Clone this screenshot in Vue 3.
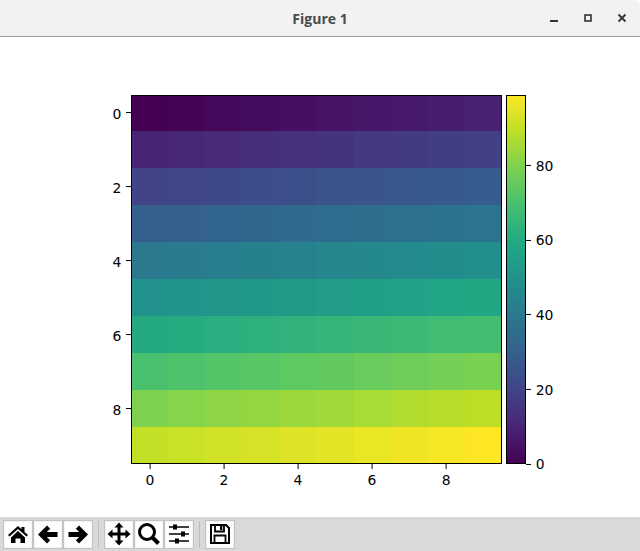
<script setup>
const viridis = [
  [68, 1, 84], [72, 36, 117], [65, 68, 135], [53, 95, 141], [42, 120, 142],
  [33, 145, 140], [34, 168, 132], [68, 191, 112], [122, 209, 81], [189, 223, 38], [253, 231, 37],
]

const colorAt = (t) => {
  const p = Math.min(t, 1) * 10
  const i = Math.min(Math.floor(p), 9)
  const f = p - i
  const c = viridis[i].map((v, k) => Math.round(v + (viridis[i + 1][k] - v) * f))
  return `rgb(${c.join(',')})`
}

const cells = Array.from({ length: 100 }, (_, i) => ({ id: i, color: colorAt(i / 99) }))
const ticks = [0, 2, 4, 6, 8]
const barTicks = [0, 20, 40, 60, 80]
const barGradient = `linear-gradient(to top, ${viridis.map((_, i) => colorAt(i / 10)).join(', ')})`
</script>

<template>
  <div class="window">
    <header class="titlebar">
      <span class="title">Figure 1</span>
      <div class="controls">
        <svg width="10" height="10" viewBox="0 0 10 10"><rect x="1" y="7" width="8" height="2" fill="#2e3436" /></svg>
        <svg width="10" height="10" viewBox="0 0 10 10"><rect x="2" y="2" width="6" height="6" fill="none" stroke="#2e3436" stroke-width="1.6" /></svg>
        <svg width="10" height="10" viewBox="0 0 10 10"><path d="M1.5 1.5l7 7M8.5 1.5l-7 7" stroke="#2e3436" stroke-width="1.8" /></svg>
      </div>
    </header>

    <main class="figure">
      <div class="axes">
        <div class="heatmap">
          <div v-for="c in cells" :key="c.id" :style="{ background: c.color }"></div>
        </div>
        <div v-for="t in ticks" :key="'x' + t" class="tick tick-x" :style="{ left: (t + 0.5) * 10 + '%' }">
          <span class="mark"></span><span class="label">{{ t }}</span>
        </div>
        <div v-for="t in ticks" :key="'y' + t" class="tick tick-y" :style="{ top: (t + 0.5) * 10 + '%' }">
          <span class="label">{{ t }}</span><span class="mark"></span>
        </div>
      </div>
      <div class="colorbar" :style="{ background: barGradient }">
        <div v-for="t in barTicks" :key="t" class="tick tick-bar" :style="{ bottom: t / 99 * 100 + '%' }">
          <span class="mark"></span><span class="label">{{ t }}</span>
        </div>
      </div>
    </main>

    <footer class="toolbar">
      <div class="group">
        <button class="tool">
          <svg width="22" height="22" viewBox="0 0 22 22"><path d="M11 3L1 12l1.5 1.5L11 6l8.500 7.500L21 12l-3.500-3.100V4h-3v2.200z" fill="#000" /><path d="M4 14.500L11 8l7 6.500V20h-4.500v-4.500h-5V20H4z" fill="#000" /></svg>
        </button>
        <button class="tool">
          <svg width="22" height="22" viewBox="0 0 22 22"><path d="M10 2.500l3.200 3.200-3.400 3.300H20.500v5H9.800l3.400 3.300-3.200 3.200L1 11.500z" fill="#000" /></svg>
        </button>
        <button class="tool">
          <svg width="22" height="22" viewBox="0 0 22 22"><path d="M12 2.500L8.800 5.700l3.400 3.300H1.500v5h10.700l-3.400 3.300 3.200 3.200 9-9z" fill="#000" /></svg>
        </button>
      </div>
      <span class="sep"></span>
      <div class="group">
        <button class="tool">
          <svg width="24" height="24" viewBox="0 0 24 24"><path d="M12 0.500l4.500 5h-3v5h5v-3l5 4.500-5 4.500v-3h-5v5h3L12 23.500l-4.500-5h3v-5h-5v3L0.500 12l5-4.500v3h5v-5h-3z" fill="#000" /></svg>
        </button>
        <button class="tool">
          <svg width="24" height="24" viewBox="0 0 24 24"><circle cx="10" cy="10" r="7.500" fill="none" stroke="#000" stroke-width="3" /><path d="M15 15l6.500 6.500" stroke="#000" stroke-width="4" /></svg>
        </button>
        <button class="tool">
          <svg width="24" height="24" viewBox="0 0 24 24"><path d="M2 5h20M2 12h20M2 19h20" stroke="#000" stroke-width="1.600" /><path d="M6 2.500h4v5H6zM14 9.500h4v5h-4zM8 16.500h4v5H8z" fill="#000" /></svg>
        </button>
      </div>
      <span class="sep"></span>
      <div class="group">
        <button class="tool">
          <svg width="22" height="22" viewBox="0 0 22 22"><path d="M2 2h15l3 3v15H2z" fill="none" stroke="#000" stroke-width="2" /><path d="M6 2.500v6h9v-6" fill="none" stroke="#000" stroke-width="1.800" /><rect x="11" y="3" width="2.400" height="4" fill="#000" /><path d="M5.500 20v-7.500h11V20" fill="none" stroke="#000" stroke-width="1.800" /></svg>
        </button>
      </div>
    </footer>
  </div>
</template>

<style scoped>
.window {
  width: 640px;
  height: 551px;
  display: flex;
  flex-direction: column;
  background: #fff;
  overflow: hidden;
}

.titlebar {
  position: relative;
  height: 36px;
  flex: none;
  display: flex;
  align-items: center;
  justify-content: center;
  background: #f2f2f2;
  border-bottom: 1px solid #9c9c9c;
  border-top-right-radius: 6px;
}

.title {
  font: bold 14px "Open Sans", sans-serif;
  color: #484d4f;
}

.controls {
  position: absolute;
  right: 13px;
  top: 13px;
  display: flex;
  gap: 24px;
}

.figure {
  flex: 1;
  display: flex;
  align-items: flex-start;
  gap: 4.4px;
  padding: 57.5px 0 0 131.4px;
  font: 13.9px "DejaVu Sans", sans-serif;
  color: #000;
}

.axes {
  position: relative;
  flex: none;
  width: 370.2px;
  height: 369.6px;
  outline: 1px solid #000;
  outline-offset: -1px;
}

.heatmap {
  width: 100%;
  height: 100%;
  display: grid;
  grid-template-columns: repeat(10, 1fr);
  grid-template-rows: repeat(10, 1fr);
}

.colorbar {
  position: relative;
  flex: none;
  width: 19.8px;
  height: 369.6px;
  outline: 1px solid #000;
  outline-offset: -1px;
}

.tick {
  position: absolute;
  display: flex;
  align-items: center;
  line-height: 1;
}

.mark {
  background: #000;
  flex: none;
}

.tick-x {
  top: 100%;
  flex-direction: column;
  transform: translateX(-50%);
}

.tick-x .mark {
  width: 1px;
  height: 5px;
}

.tick-x .label {
  margin-top: 5px;
}

.tick-y {
  right: 100%;
  transform: translateY(-50%);
}

.tick-y .mark {
  width: 5px;
  height: 1px;
}

.tick-y .label {
  margin-right: 5px;
  transform: translateY(1.5px);
}

.tick-bar {
  left: 100%;
  transform: translateY(50%);
}

.tick-bar .mark {
  width: 5px;
  height: 1px;
}

.tick-bar .label {
  margin-left: 5px;
  transform: translateY(1.5px);
}

.toolbar {
  height: 34px;
  flex: none;
  display: flex;
  align-items: center;
  padding-left: 4px;
  background: #d9d9d9;
}

.group {
  display: flex;
  gap: 2px;
}

.tool {
  width: 28px;
  height: 27px;
  padding: 0;
  display: flex;
  align-items: center;
  justify-content: center;
  background: #fff;
  border: 1px solid #f4f4f4;
  box-shadow: 0 0 0 1px #c4c4c4;
}

.sep {
  width: 1px;
  height: 27px;
  margin: 0 6px;
  background: #bdbdbd;
}
</style>
